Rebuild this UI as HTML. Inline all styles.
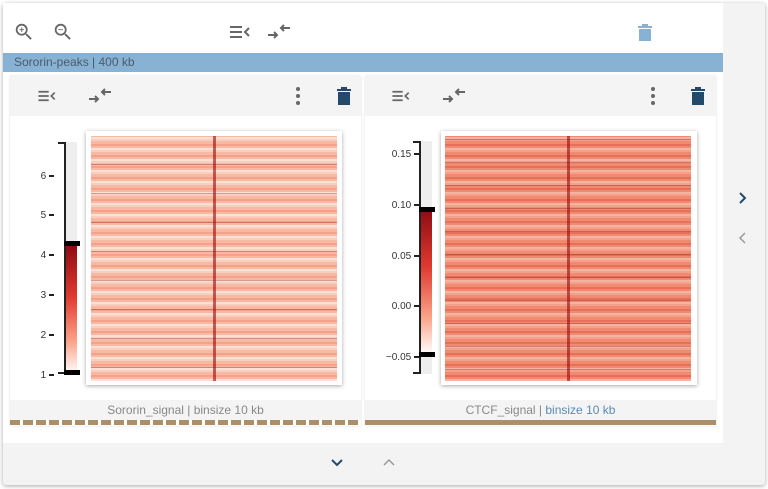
<!DOCTYPE html>
<html><head><meta charset="utf-8"><style>
*{margin:0;padding:0;box-sizing:border-box}
body{width:768px;height:489px;background:#fff;font-family:"Liberation Sans",sans-serif;position:relative;overflow:hidden}
.abs{position:absolute}
.outer{left:3px;top:3px;width:762px;height:482px;background:#f3f3f3;box-shadow:0 1px 4px rgba(0,0,0,.35);border-radius:3px}
.main{left:3px;top:3px;width:720px;height:440px;background:#fff}
.bluebar{left:3px;top:53px;width:720px;height:19px;background:#87b2d4;color:#4b5b6b;font-size:12px;line-height:19px;padding-left:11px}
.panel{top:76px;width:351px;height:350px;background:#fff;box-shadow:0 0 2px rgba(0,0,0,.15)}
.ph{left:0;top:0;width:100%;height:40px;background:#f4f4f4}
.pf{left:0;top:324px;width:100%;height:20px;background:#f4f4f4;color:#888;font-size:12px;text-align:center;line-height:21px}
.pb{left:0;top:344px;width:100%;height:5px;background:#ab8f68}
.card{width:256px;height:254px;background:#fff;box-shadow:0 1px 4px rgba(0,0,0,.35)}
.hm{left:5px;top:5px;width:246px;height:245px}
.lbl{font-size:10px;color:#333;text-align:right;width:30px}
</style></head><body>
<div class="abs outer"></div>
<div class="abs main"></div>
<svg class="abs" style="left:13px;top:21px" width="22" height="22" viewBox="0 0 24 24"><path fill="#666" d="M15.5 14h-.79l-.28-.27A6.47 6.47 0 0016 9.5 6.5 6.5 0 109.5 16c1.61 0 3.09-.59 4.23-1.57l.27.28v.79l5 4.99L20.490 19l-4.99-5zm-6 0C7.01 14 5 11.99 5 9.5S7.010 5 9.5 5 14 7.01 14 9.5 11.99 14 9.5 14zm.5-7H9v2H7v1h2v2h1v-2h2V9h-2z"/></svg>
<svg class="abs" style="left:52px;top:21px" width="22" height="22" viewBox="0 0 24 24"><path fill="#666" d="M15.5 14h-.79l-.28-.27A6.47 6.47 0 0016 9.5 6.5 6.5 0 109.5 16c1.61 0 3.09-.59 4.23-1.57l.27.28v.79l5 4.99L20.49 19l-4.99-5zm-6 0C7.01 14 5 11.99 5 9.5S7.01 5 9.5 5 14 7.01 14 9.5 11.99 14 9.5 14zM7 9h5v1H7z"/></svg>
<svg class="abs" style="left:230px;top:25px" width="20" height="14" viewBox="0 0 20 14"><path stroke="#666" stroke-width="2" fill="none" d="M0 2h12M0 7h12M0 12h12M19 3l-4 4 4 4"/></svg>
<svg class="abs" style="left:268px;top:24px" width="22" height="16" viewBox="0 0 22 16"><path stroke="#666" stroke-width="2" fill="none" d="M0 11h9M6 8l3 3-3 3M22 4h-9M16 1l-3 3 3 3"/></svg>
<svg class="abs" style="left:637px;top:23px" width="16" height="19" viewBox="0 0 16 19"><path fill="#87b2d4" d="M1 3h14v2H1zM5 1h6v2H5zM2 6h12v12H2z"/></svg>
<div class="abs bluebar">Sororin-peaks | 400 kb</div>

<div class="abs panel" style="left:10px">
 <div class="abs ph"></div>
 <svg class="abs" style="left:28px;top:14px" width="18" height="12" viewBox="0 0 20 14"><path stroke="#666" stroke-width="2" fill="none" d="M0 2h12M0 7h12M0 12h12M19 3l-4 4 4 4"/></svg>
 <svg class="abs" style="left:79px;top:12px" width="22" height="16" viewBox="0 0 22 16"><path stroke="#666" stroke-width="2" fill="none" d="M0 11h9M6 8l3 3-3 3M22 4h-9M16 1l-3 3 3 3"/></svg>
 <svg class="abs" style="left:286px;top:11px" width="4" height="18"><circle cx="2" cy="2" r="2" fill="#666"/><circle cx="2" cy="9" r="2" fill="#666"/><circle cx="2" cy="16" r="2" fill="#666"/></svg>
 <svg class="abs" style="left:326px;top:11px" width="16" height="19" viewBox="0 0 16 19"><path fill="#244a6b" d="M1 2h14v2H1zM5 0h6v2H5zM2 5h12v13H2z"/></svg>
 <div class="abs" style="left:56px;top:66px;width:11px;height:232px;background:#eee"></div>
 <div class="abs" style="left:56px;top:169px;width:11px;height:129px;background:linear-gradient(#8e0a12,#e03a30 40%,#fba48a 75%,#fff)"></div>
 <div class="abs" style="left:54px;top:66px;width:2px;height:232px;background:#222"></div>
 <div class="abs" style="left:48px;top:66px;width:7px;height:2px;background:#222"></div>
 <div class="abs" style="left:48px;top:296px;width:7px;height:2px;background:#222"></div>
 <div class="abs" style="left:54px;top:165px;width:16px;height:5px;background:#000"></div>
 <div class="abs" style="left:54px;top:294px;width:16px;height:5px;background:#000"></div>
 <div class="abs lbl" style="left:14px;top:95px">6 <b style="display:inline-block;width:5px;height:2px;background:#222;vertical-align:middle"></b></div>
 <div class="abs lbl" style="left:14px;top:134px">5 <b style="display:inline-block;width:5px;height:2px;background:#222;vertical-align:middle"></b></div>
 <div class="abs lbl" style="left:14px;top:174px">4 <b style="display:inline-block;width:5px;height:2px;background:#222;vertical-align:middle"></b></div>
 <div class="abs lbl" style="left:14px;top:214px">3 <b style="display:inline-block;width:5px;height:2px;background:#222;vertical-align:middle"></b></div>
 <div class="abs lbl" style="left:14px;top:254px">2 <b style="display:inline-block;width:5px;height:2px;background:#222;vertical-align:middle"></b></div>
 <div class="abs lbl" style="left:14px;top:294px">1 <b style="display:inline-block;width:5px;height:2px;background:#222;vertical-align:middle"></b></div>
 <div class="abs card" style="left:76px;top:55px"><div class="abs hm" style="background:
  linear-gradient(90deg,transparent 122px,rgba(150,10,10,.6) 122px,rgba(150,10,10,.6) 125px,transparent 125px),
  repeating-linear-gradient(0deg,transparent 0 13px,rgba(120,0,10,.3) 13px 14px,transparent 14px 29px),
  repeating-linear-gradient(0deg,rgba(255,255,255,.55) 0 2px,transparent 2px 4px,rgba(235,90,70,.25) 4px 6px,transparent 6px 9px,rgba(255,255,255,.3) 9px 11px),
  #f8b9a2"></div></div>
 <div class="abs pf">Sororin_signal | binsize 10 kb</div>
 <div class="abs pb" style="background:repeating-linear-gradient(90deg,#ab8f68 0 10px,#fff 10px 13px)"></div>
</div>

<div class="abs panel" style="left:365px">
 <div class="abs ph"></div>
 <svg class="abs" style="left:27px;top:14px" width="18" height="12" viewBox="0 0 20 14"><path stroke="#666" stroke-width="2" fill="none" d="M0 2h12M0 7h12M0 12h12M19 3l-4 4 4 4"/></svg>
 <svg class="abs" style="left:78px;top:12px" width="22" height="16" viewBox="0 0 22 16"><path stroke="#666" stroke-width="2" fill="none" d="M0 11h9M6 8l3 3-3 3M22 4h-9M16 1l-3 3 3 3"/></svg>
 <svg class="abs" style="left:286px;top:11px" width="4" height="18"><circle cx="2" cy="2" r="2" fill="#666"/><circle cx="2" cy="9" r="2" fill="#666"/><circle cx="2" cy="16" r="2" fill="#666"/></svg>
 <svg class="abs" style="left:325px;top:11px" width="16" height="19" viewBox="0 0 16 19"><path fill="#244a6b" d="M1 2h14v2H1zM5 0h6v2H5zM2 5h12v13H2z"/></svg>
 <div class="abs" style="left:56px;top:65px;width:11px;height:233px;background:#eee"></div>
 <div class="abs" style="left:56px;top:133px;width:11px;height:145px;background:linear-gradient(#8e0a12,#e03a30 40%,#fba48a 75%,#fff)"></div>
 <div class="abs" style="left:54px;top:65px;width:2px;height:233px;background:#222"></div>
 <div class="abs" style="left:48px;top:65px;width:7px;height:2px;background:#222"></div>
 <div class="abs" style="left:48px;top:296px;width:7px;height:2px;background:#222"></div>
 <div class="abs" style="left:54px;top:131px;width:16px;height:5px;background:#000"></div>
 <div class="abs" style="left:54px;top:276px;width:16px;height:5px;background:#000"></div>
 <div class="abs lbl" style="left:16px;top:73px;width:38px">0.15 <b style="display:inline-block;width:5px;height:2px;background:#222;vertical-align:middle"></b></div>
 <div class="abs lbl" style="left:16px;top:124px;width:38px">0.10 <b style="display:inline-block;width:5px;height:2px;background:#222;vertical-align:middle"></b></div>
 <div class="abs lbl" style="left:16px;top:175px;width:38px">0.05 <b style="display:inline-block;width:5px;height:2px;background:#222;vertical-align:middle"></b></div>
 <div class="abs lbl" style="left:16px;top:225px;width:38px">0.00 <b style="display:inline-block;width:5px;height:2px;background:#222;vertical-align:middle"></b></div>
 <div class="abs lbl" style="left:8px;top:276px;width:46px">−0.05 <b style="display:inline-block;width:5px;height:2px;background:#222;vertical-align:middle"></b></div>
 <div class="abs card" style="left:76px;top:55px"><div class="abs hm" style="left:4px;background:
  linear-gradient(90deg,transparent 122px,rgba(150,10,10,.6) 122px,rgba(150,10,10,.6) 125px,transparent 125px),
  repeating-linear-gradient(0deg,transparent 0 11px,rgba(120,0,10,.3) 11px 12px,transparent 12px 23px),
  repeating-linear-gradient(0deg,rgba(255,255,255,.35) 0 2px,transparent 2px 4px,rgba(210,50,40,.3) 4px 6px,transparent 6px 9px,rgba(255,255,255,.2) 9px 11px),
  #f08a70"></div></div>
 <div class="abs pf">CTCF_signal | <span style="color:#5b8ab0">binsize 10 kb</span></div>
 <div class="abs pb"></div>
</div>

<svg class="abs" style="left:738px;top:192px" width="10" height="12"><path d="M2 1l5 5-5 5" stroke="#244a6b" stroke-width="2" fill="none"/></svg>
<svg class="abs" style="left:738px;top:232px" width="10" height="12"><path d="M7 1L2 6l5 5" stroke="#999" stroke-width="1.5" fill="none"/></svg>
<svg class="abs" style="left:331px;top:458px" width="12" height="9"><path d="M1 2l5 5 5-5" stroke="#244a6b" stroke-width="2" fill="none"/></svg>
<svg class="abs" style="left:383px;top:458px" width="12" height="9"><path d="M1 7l5-5 5 5" stroke="#999" stroke-width="1.5" fill="none"/></svg>
</body></html>
